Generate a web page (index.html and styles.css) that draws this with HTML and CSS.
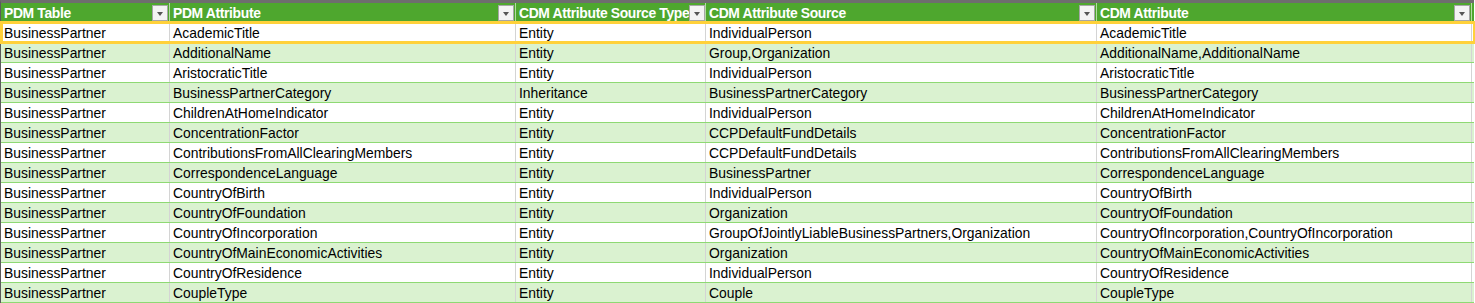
FILE: index.html
```html
<!DOCTYPE html>
<html lang="en">
<head>
    <meta charset="UTF-8">
    <title>PDM to CDM mapping</title>
    <link rel="stylesheet" href="styles.css">
</head>
<body>

    <div class="sheet">
        <div class="row head">
            <div class="cell"><span>PDM Table</span><i class="drop"></i></div>
            <div class="cell"><span>PDM Attribute</span><i class="drop"></i></div>
            <div class="cell"><span>CDM Attribute Source Type</span><i class="drop"></i></div>
            <div class="cell"><span>CDM Attribute Source</span><i class="drop"></i></div>
            <div class="cell"><span>CDM Attribute</span><i class="drop"></i></div>
        </div>
        <div class="row selected">
            <div class="cell">BusinessPartner</div><div class="cell">AcademicTitle</div><div class="cell">Entity</div><div class="cell">IndividualPerson</div><div class="cell">AcademicTitle</div>
        </div>
        <div class="row band">
            <div class="cell">BusinessPartner</div><div class="cell">AdditionalName</div><div class="cell">Entity</div><div class="cell">Group,Organization</div><div class="cell">AdditionalName,AdditionalName</div>
        </div>
        <div class="row">
            <div class="cell">BusinessPartner</div><div class="cell">AristocraticTitle</div><div class="cell">Entity</div><div class="cell">IndividualPerson</div><div class="cell">AristocraticTitle</div>
        </div>
        <div class="row band">
            <div class="cell">BusinessPartner</div><div class="cell">BusinessPartnerCategory</div><div class="cell">Inheritance</div><div class="cell">BusinessPartnerCategory</div><div class="cell">BusinessPartnerCategory</div>
        </div>
        <div class="row">
            <div class="cell">BusinessPartner</div><div class="cell">ChildrenAtHomeIndicator</div><div class="cell">Entity</div><div class="cell">IndividualPerson</div><div class="cell">ChildrenAtHomeIndicator</div>
        </div>
        <div class="row band">
            <div class="cell">BusinessPartner</div><div class="cell">ConcentrationFactor</div><div class="cell">Entity</div><div class="cell">CCPDefaultFundDetails</div><div class="cell">ConcentrationFactor</div>
        </div>
        <div class="row">
            <div class="cell">BusinessPartner</div><div class="cell">ContributionsFromAllClearingMembers</div><div class="cell">Entity</div><div class="cell">CCPDefaultFundDetails</div><div class="cell">ContributionsFromAllClearingMembers</div>
        </div>
        <div class="row band">
            <div class="cell">BusinessPartner</div><div class="cell">CorrespondenceLanguage</div><div class="cell">Entity</div><div class="cell">BusinessPartner</div><div class="cell">CorrespondenceLanguage</div>
        </div>
        <div class="row">
            <div class="cell">BusinessPartner</div><div class="cell">CountryOfBirth</div><div class="cell">Entity</div><div class="cell">IndividualPerson</div><div class="cell">CountryOfBirth</div>
        </div>
        <div class="row band">
            <div class="cell">BusinessPartner</div><div class="cell">CountryOfFoundation</div><div class="cell">Entity</div><div class="cell">Organization</div><div class="cell">CountryOfFoundation</div>
        </div>
        <div class="row">
            <div class="cell">BusinessPartner</div><div class="cell">CountryOfIncorporation</div><div class="cell">Entity</div><div class="cell">GroupOfJointlyLiableBusinessPartners,Organization</div><div class="cell">CountryOfIncorporation,CountryOfIncorporation</div>
        </div>
        <div class="row band">
            <div class="cell">BusinessPartner</div><div class="cell">CountryOfMainEconomicActivities</div><div class="cell">Entity</div><div class="cell">Organization</div><div class="cell">CountryOfMainEconomicActivities</div>
        </div>
        <div class="row">
            <div class="cell">BusinessPartner</div><div class="cell">CountryOfResidence</div><div class="cell">Entity</div><div class="cell">IndividualPerson</div><div class="cell">CountryOfResidence</div>
        </div>
        <div class="row band">
            <div class="cell">BusinessPartner</div><div class="cell">CoupleType</div><div class="cell">Entity</div><div class="cell">Couple</div><div class="cell">CoupleType</div>
        </div>
    </div>

</body>
</html>
```

FILE: styles.css
```css
body {
    margin: 0;
    background: #fff;
    font-family: "Liberation Sans", Arial, sans-serif;
    font-size: 13.9px;
    color: #000;
    overflow: hidden;
}
.sheet {
    border-top: 3px solid #6e6e6e;
    border-left: 1px solid #5a5a5a;
    width: 1473px;
}
.row {
    display: grid;
    grid-template-columns: 169px 346px 190px 391px 375px;
    height: 20px;
    box-sizing: border-box;
    border-bottom: 1px solid #8ed973;
    background: #fff;
}
.row.band {
    background: #daf2d0;
}
.cell {
    padding: 1px 0 0 3px;
    border-right: 1px solid #d4d4d4;
    line-height: 18px;
    white-space: nowrap;
    overflow: hidden;
    display: flex;
    align-items: center;
}
.head {
    background: #4ea72e;
    border-bottom: none;
    color: #fff;
    font-weight: bold;
    letter-spacing: -0.35px;
}
.head .cell {
    padding-top: 0;
    border-right-color: #b5d9a5;
}
.drop {
    flex: none;
    margin-left: auto;
    margin-right: 1px;
    width: 16px;
    height: 16px;
    box-sizing: border-box;
    border: 1px solid #a6a6a6;
    background: #f3f3f3;
    position: relative;
}
.drop::after {
    content: "";
    position: absolute;
    left: 4px;
    top: 6px;
    border-left: 3.5px solid transparent;
    border-right: 3.5px solid transparent;
    border-top: 4px solid #555;
}
.selected {
    position: relative;
}
.selected::after {
    content: "";
    position: absolute;
    top: -2px;
    bottom: -2px;
    left: -1px;
    right: -2px;
    border: 3px solid #ffd13a;
    pointer-events: none;
}
```
